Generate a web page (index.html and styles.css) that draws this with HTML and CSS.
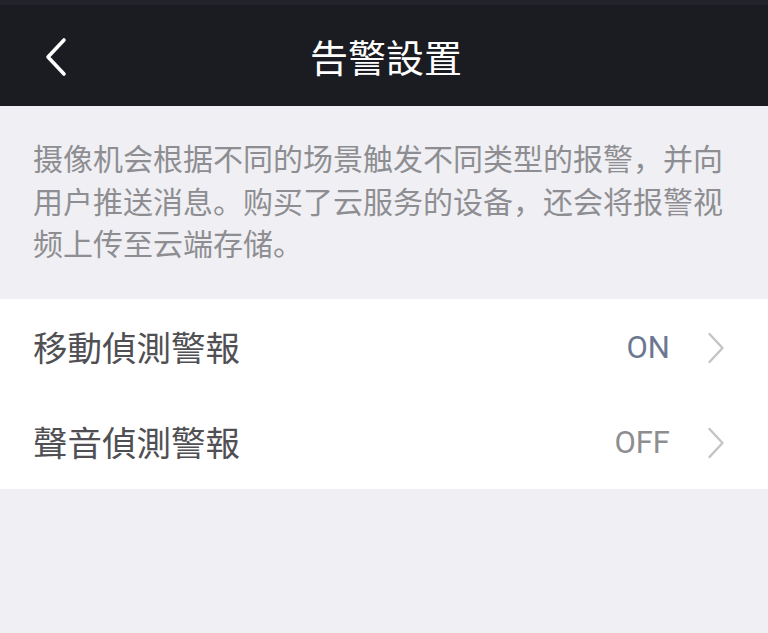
FILE: index.html
```html
<!DOCTYPE html>
<html lang="zh">
<head>
<meta charset="utf-8">
<link rel="stylesheet" href="styles.css">
</head>
<body>
<div class="page">
  <header class="topbar">
    <div class="status-strip"></div>
    <div class="nav">
      <span class="back">
        <svg width="28" height="40" viewBox="0 0 28 40"><path d="M22 3 L6 20 L22 37" fill="none" stroke="#ffffff" stroke-width="3.6" stroke-linecap="round" stroke-linejoin="round"/></svg>
      </span>
      <h1 class="title">告警設置</h1>
    </div>
  </header>
  <section class="desc">
    <p>摄像机会根据不同的场景触发不同类型的报警，并向用户推送消息。购买了云服务的设备，还会将报警视频上传至云端存储。</p>
  </section>
  <ul class="list">
    <li class="row">
      <span class="label">移動偵測警報</span>
      <span class="value on">ON</span>
      <svg class="chev" width="18" height="32" viewBox="0 0 18 32"><path d="M2.5 2 L15.5 16 L2.5 30" fill="none" stroke="#c4c4c6" stroke-width="2.4" stroke-linecap="round" stroke-linejoin="round"/></svg>
    </li>
    <li class="row">
      <span class="label">聲音偵測警報</span>
      <span class="value off">OFF</span>
      <svg class="chev" width="18" height="32" viewBox="0 0 18 32"><path d="M2.5 2 L15.5 16 L2.5 30" fill="none" stroke="#c4c4c6" stroke-width="2.4" stroke-linecap="round" stroke-linejoin="round"/></svg>
    </li>
  </ul>
</div>
</body>
</html>
```
FILE: styles.css
```css
html, body {
  margin: 0;
  padding: 0;
  background: #f0f0f4;
}
body {
  width: 768px;
  height: 633px;
  overflow: hidden;
  font-family: "Noto Sans CJK SC", "Noto Sans", sans-serif;
}
.page {
  display: flex;
  flex-direction: column;
}
.topbar {
  background: #1b1c22;
  height: 106px;
  display: flex;
  flex-direction: column;
}
.status-strip {
  height: 5px;
  background: #23242b;
}
.nav {
  flex: 1;
  display: flex;
  align-items: center;
  justify-content: center;
  position: relative;
}
.back {
  position: absolute;
  left: 42px;
  top: 32px;
  width: 28px;
  height: 40px;
  display: flex;
}
.title {
  margin: 0;
  color: #ffffff;
  font-family: "Noto Sans CJK TC", "Noto Sans", sans-serif;
  font-weight: 400;
  font-size: 38px;
  line-height: 1;
  margin-left: 4px;
}
.desc {
  padding: 30px 30px 35px 33px;
}
.desc p {
  margin: 0;
  color: #8e8e92;
  font-size: 30px;
  line-height: 42.5px;
}
.list {
  list-style: none;
  margin: 0;
  padding: 0;
  background: #ffffff;
  display: flex;
  flex-direction: column;
}
.row {
  height: 95px;
  display: flex;
  align-items: center;
  padding: 0 43px 0 33px;
}
.label {
  flex: 1;
  font-family: "Noto Sans CJK TC", "Noto Sans", sans-serif;
  font-size: 34.5px;
  color: #505054;
}
.value {
  font-family: Roboto, "Noto Sans", sans-serif;
  font-size: 31px;
  margin-right: 37px;
  padding-top: 2px;
}
.value.on { color: #6c7891; }
.value.off { color: #8e8e90; }
.chev {
  display: block;
  margin-top: 3px;
}
```
